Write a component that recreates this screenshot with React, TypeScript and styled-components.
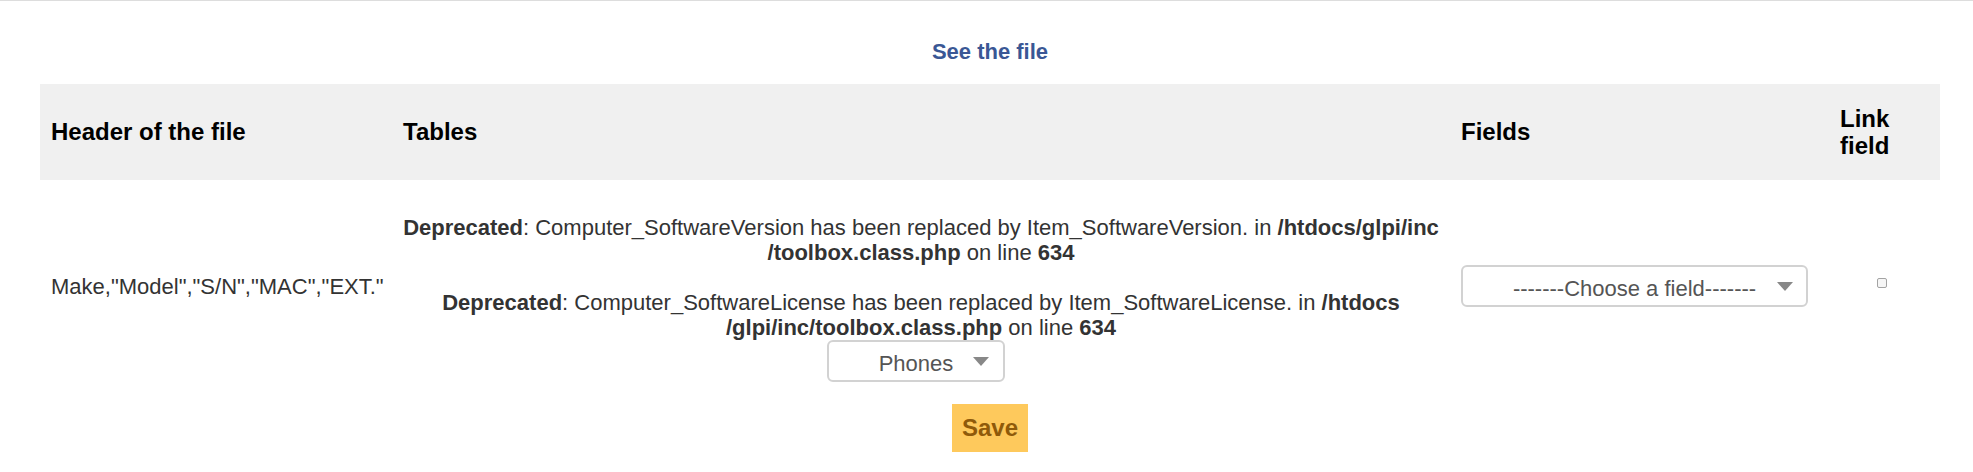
import React from "react";
import styled, { createGlobalStyle } from "styled-components";

const GlobalStyle = createGlobalStyle`
  html, body {
    margin: 0;
    padding: 0;
    background: #ffffff;
  }
  body {
    font-family: "Liberation Sans", Arial, Helvetica, sans-serif;
    color: #333333;
  }
`;

const Page = styled.div`
  border-top: 1px solid #dddddd;
  padding: 38px 0 20px 40px;
`;

const Content = styled.div`
  width: 1900px;
`;

const FileLink = styled.a`
  display: block;
  text-align: center;
  font-size: 22px;
  line-height: 25px;
  font-weight: bold;
  color: #3a5795;
  text-decoration: none;
  margin-bottom: 20px;
`;

const COLS = "352px 1058px 379px 111px";

const HeaderRow = styled.div`
  display: grid;
  grid-template-columns: ${COLS};
  align-items: center;
  height: 96px;
  background: #f0f0f0;
`;

const HeadCell = styled.div`
  padding: 0 11px;
  font-size: 24px;
  line-height: 27.5px;
  font-weight: bold;
  color: #000000;
`;

const BodyRow = styled.div`
  display: grid;
  grid-template-columns: ${COLS};
  align-items: center;
  padding: 10px 0;
`;

const Cell = styled.div<{ $center?: boolean }>`
  padding: 0 11px;
  font-size: 22px;
  line-height: 25px;
  color: #333333;
  text-align: ${(p) => (p.$center ? "center" : "left")};
`;

const TablesCell = styled(Cell)`
  display: flex;
  flex-direction: column;
  align-items: center;
`;

const NoticeLine = styled.div<{ $blank?: boolean }>`
  height: 25px;
  white-space: nowrap;
`;

const SelectBox = styled.div<{ $width: number; $shift?: number }>`
  position: relative;
  box-sizing: border-box;
  width: ${(p) => p.$width}px;
  height: 42px;
  padding-top: 4px;
  margin-right: ${(p) => p.$shift ?? 0}px;
  border: 2px solid #d2d2d2;
  border-radius: 6px;
  background: #ffffff;
  display: flex;
  align-items: center;
  justify-content: center;
  font-size: 22px;
  line-height: 25px;
  color: #555555;
  cursor: pointer;
`;

const Arrow = styled.span<{ $right: number }>`
  position: absolute;
  right: ${(p) => p.$right}px;
  top: 50%;
  margin-top: -4px;
  width: 0;
  height: 0;
  border-left: 8px solid transparent;
  border-right: 8px solid transparent;
  border-top: 9px solid #888888;
`;

const CheckCell = styled.div`
  display: flex;
  justify-content: center;
  align-items: center;
  padding: 0 11px;
`;

const Check = styled.input`
  appearance: none;
  -webkit-appearance: none;
  box-sizing: border-box;
  width: 10px;
  height: 10px;
  margin: 0 5px 6px 0;
  border: 1px solid #a3a3a3;
  border-radius: 2px;
  background: #f6f6f6;
`;

const SaveRow = styled.div`
  display: flex;
  justify-content: center;
  padding-top: 12px;
`;

const SaveButton = styled.button`
  height: 48px;
  padding: 0 10px;
  border: none;
  border-radius: 0;
  background: #fec95c;
  color: #8f5a0a;
  font-family: "Liberation Sans", Arial, Helvetica, sans-serif;
  font-size: 24px;
  font-weight: bold;
  cursor: pointer;
`;

export default function App() {
  return (
    <>
      <GlobalStyle />
      <Page>
        <Content>
          <FileLink href="#">See the file</FileLink>
          <HeaderRow>
            <HeadCell>Header of the file</HeadCell>
            <HeadCell>Tables</HeadCell>
            <HeadCell>Fields</HeadCell>
            <HeadCell>
              Link
              <br />
              field
            </HeadCell>
          </HeaderRow>
          <BodyRow>
            <Cell>Make,"Model","S/N","MAC","EXT."</Cell>
            <TablesCell $center>
              <NoticeLine $blank />
              <NoticeLine>
                <b>Deprecated</b>: Computer_SoftwareVersion has been replaced by
                Item_SoftwareVersion. in <b>/htdocs/glpi/inc</b>
              </NoticeLine>
              <NoticeLine>
                <b>/toolbox.class.php</b> on line <b>634</b>
              </NoticeLine>
              <NoticeLine $blank />
              <NoticeLine>
                <b>Deprecated</b>: Computer_SoftwareLicense has been replaced by
                Item_SoftwareLicense. in <b>/htdocs</b>
              </NoticeLine>
              <NoticeLine>
                <b>/glpi/inc/toolbox.class.php</b> on line <b>634</b>
              </NoticeLine>
              <SelectBox $width={178} $shift={10}>
                Phones
                <Arrow $right={14} />
              </SelectBox>
            </TablesCell>
            <Cell>
              <SelectBox $width={347}>
                -------Choose a field-------
                <Arrow $right={13} />
              </SelectBox>
            </Cell>
            <CheckCell>
              <Check type="checkbox" />
            </CheckCell>
          </BodyRow>
          <SaveRow>
            <SaveButton type="button">Save</SaveButton>
          </SaveRow>
        </Content>
      </Page>
    </>
  );
}
